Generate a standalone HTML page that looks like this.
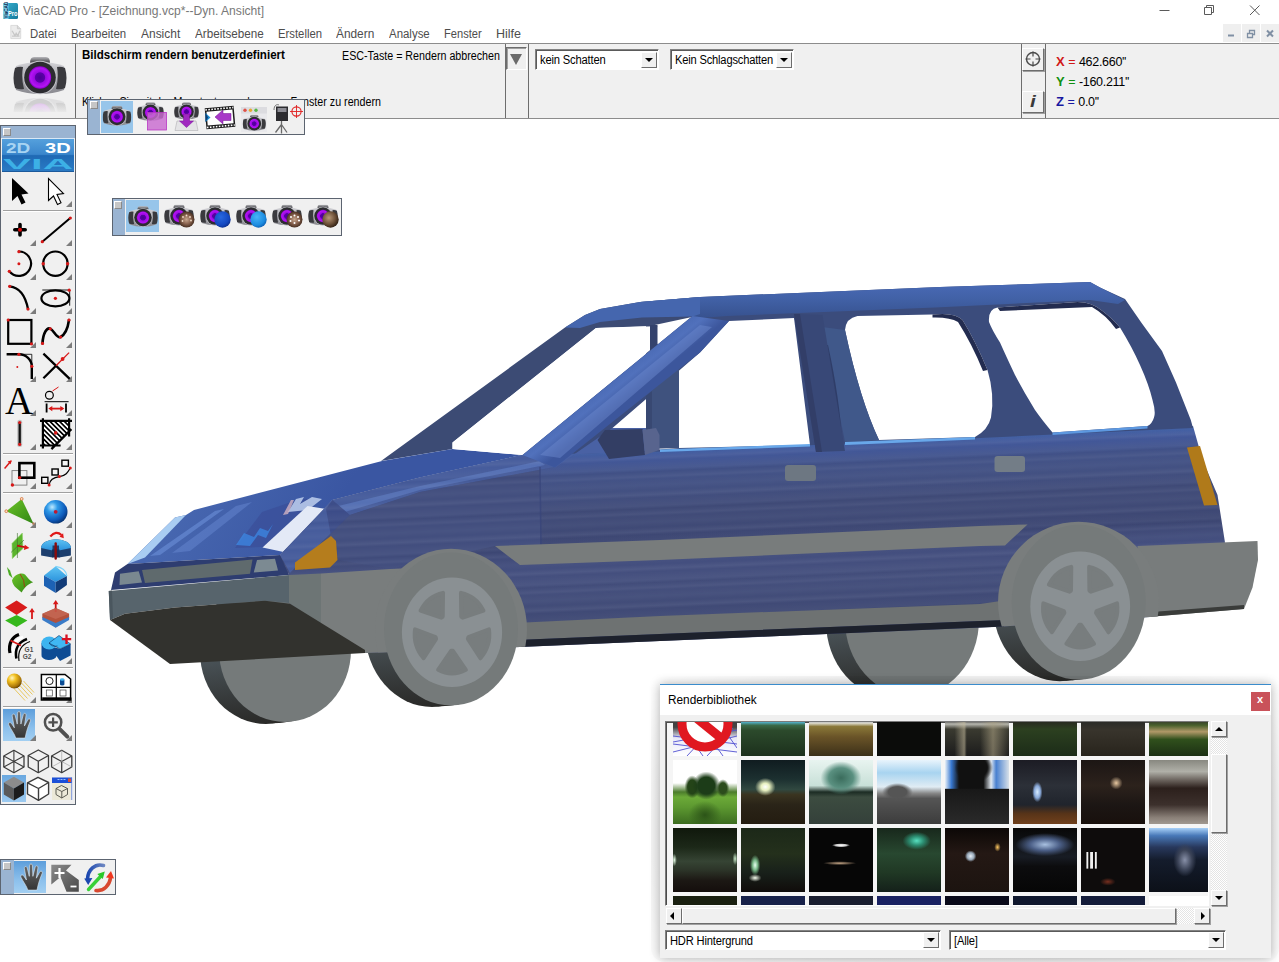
<!DOCTYPE html>
<html lang="de"><head><meta charset="utf-8"><title>ViaCAD Pro</title>
<style>
*{box-sizing:border-box;margin:0;padding:0}
html,body{width:1279px;height:962px;overflow:hidden;background:#fff}
body{position:relative;font-family:"Liberation Sans",sans-serif;font-size:12px;color:#000}
.abs{position:absolute}
.t{position:absolute;white-space:nowrap;line-height:1}
#titlebar{left:0;top:0;width:1279px;height:22px;background:#fff}
#menubar{left:0;top:22px;width:1279px;height:21px;background:#fff}
.mi{position:absolute;transform-origin:0 0;top:27.500px;font-size:12px;color:#4d4d4d;white-space:nowrap;line-height:1}
#toolbar{left:0;top:43px;width:1279px;height:76px;background:#f0f0f0;border-top:1px solid #8c8c8c;border-bottom:1px solid #8c8c8c}
.vdiv{position:absolute;top:44px;height:74px;width:1px;background:#6d6d6d}
.btn3d{position:absolute;background:#f0f0f0;border:1px solid;border-color:#fff #6d6d6d #6d6d6d #fff;box-shadow:1px 1px 0 #a0a0a0}
.combo{position:absolute;height:21px;background:#fff;border:1px solid;border-color:#828282 #fff #fff #828282;box-shadow:inset 1px 1px 0 #5a5a5a}
.combo .tx{transform-origin:0 0;position:absolute;left:4px;top:4px;font-size:12px;white-space:nowrap;line-height:1;letter-spacing:-0.2px}
.combo .dd{position:absolute;right:1px;top:2px;width:16px;height:16px;background:#f0f0f0;border:1px solid;border-color:#fff #6d6d6d #6d6d6d #fff}
.combo .dd:after{content:"";position:absolute;left:3px;top:5px;border:4px solid transparent;border-top:4px solid #000;border-bottom:0}
.float{position:absolute;background:#f0f0f0;border:1px solid #5c6470}
.float .hnd{position:absolute;left:0;top:0;bottom:0;width:12px;background:#9ab4d2}
.grip{position:absolute;width:8px;height:8px;background:#c6c6c6;border:1px solid;border-color:#fff #8a8a8a #8a8a8a #fff}
.hl{position:absolute;background:#97c5ea}
.sep{position:absolute;left:3px;width:70px;height:2px;border-top:1px solid #a0a0a0;border-bottom:1px solid #fff}
.tri{position:absolute;width:0;height:0;border-left:6px solid transparent;border-bottom:6px solid #808080}
.th{position:absolute;width:64px;height:64px;overflow:hidden}
.chk{background:repeating-conic-gradient(#fff 0 25%,#e4e4e4 0 50%) 0 0/2px 2px}
svg{position:absolute;overflow:visible}
</style></head><body>
<!-- shared symbols -->
<svg width="0" height="0" style="left:0;top:0">
<defs>
<linearGradient id="gBody" x1="0" y1="0" x2="0" y2="1"><stop offset="0" stop-color="#d4d4d8"/><stop offset=".5" stop-color="#a4a4aa"/><stop offset="1" stop-color="#8a8a90"/></linearGradient>
<linearGradient id="gTop" x1="0" y1="0" x2="0" y2="1"><stop offset="0" stop-color="#b8b8bc"/><stop offset="1" stop-color="#3c3c40"/></linearGradient>
<radialGradient id="gLens" cx=".5" cy=".5" r=".5"><stop offset="0" stop-color="#4a0092"/><stop offset=".42" stop-color="#5a00a8"/><stop offset=".5" stop-color="#9a08e0"/><stop offset=".85" stop-color="#b414f4"/><stop offset="1" stop-color="#8a00c8"/></radialGradient>
<symbol id="cam" viewBox="0 0 54 38">
<path d="M17 6 Q17 0 21 0 L33 0 Q37 0 37 6 Z" fill="url(#gTop)"/>
<path d="M3 9 Q14 5 27 5 Q40 5 51 9 Q54 21 51 33 Q40 37 27 37 Q14 37 3 33 Q0 21 3 9Z" fill="url(#gBody)"/>
<path d="M2 11 Q6 9 10 10 Q8 21 11 32 Q6 33 2 31 Q-1 21 2 11Z" fill="#3a3a3e"/>
<path d="M52 11 Q48 9 44 10 Q46 21 43 32 Q48 33 52 31 Q55 21 52 11Z" fill="#3a3a3e"/>
<circle cx="27" cy="20.500" r="16.800" fill="#c4c4ca"/>
<circle cx="27" cy="20.500" r="15.800" fill="#2c2c30"/>
<circle cx="27" cy="20.500" r="11.200" fill="url(#gLens)"/>
</symbol>
</defs></svg>

<div id="titlebar" class="abs"></div>
<!-- app icon -->
<svg style="left:3px;top:3px" width="15" height="16" viewBox="0 0 15 16">
<defs><linearGradient id="gApp" x1="0" y1="0" x2="1" y2="1"><stop offset="0" stop-color="#38b0d0"/><stop offset="1" stop-color="#157a9c"/></linearGradient></defs>
<rect x="0" y="0" width="15" height="16" rx="1.500" fill="url(#gApp)"/>
<rect x="0" y="0" width="5.500" height="16" fill="#7fd0e8"/>
<text x="4.600" y="15.500" font-family="Liberation Sans,sans-serif" font-weight="bold" font-size="4.600" fill="#0c2c50" transform="rotate(-90 4.600 15.500)">ViaCAD</text>
<text x="5" y="12.500" font-family="Liberation Sans,sans-serif" font-weight="bold" font-size="7" fill="#fff" textLength="9.500" lengthAdjust="spacingAndGlyphs">Pro</text>
</svg>
<div class="t" id="ttl" style="left:23px;top:5px;font-size:12.8px;color:#787878;transform-origin:0 0;transform:scaleX(.945)">ViaCAD Pro - [Zeichnung.vcp*--Dyn. Ansicht]</div>
<!-- window controls -->
<svg style="left:1140px;top:0" width="139" height="22" viewBox="0 0 139 22">
<path d="M19.500 10.500h10" stroke="#5a5a5a" stroke-width="1" fill="none"/>
<path d="M64.500 7.500h7v7h-7z M66.500 7.500v-2h7v7h-2" stroke="#5a5a5a" stroke-width="1" fill="none"/>
<path d="M110 5.500l9.500 9.500M119.500 5.500l-9.500 9.500" stroke="#5a5a5a" stroke-width="1" fill="none"/>
</svg>

<div id="menubar" class="abs"></div>
<!-- doc icon -->
<svg style="left:9.500px;top:24.500px" width="11.500" height="14" viewBox="0 0 13 17">
<path d="M.5 .5h8l4 4v12h-12z" fill="#ececec" stroke="#d4d4d4"/>
<path d="M8.500 .5v4h4" fill="#dcdcdc" stroke="#c8c8c8"/>
<path d="M2 7l3.500 6 1.500-3 2 3 2.500-6M2 13.500h9" stroke="#c8c8c8" fill="none" stroke-width="1.600"/>
</svg>
<span class="mi" style="left:30px;transform:scaleX(0.945)">Datei</span>
<span class="mi" style="left:71px;transform:scaleX(0.951)">Bearbeiten</span>
<span class="mi" style="left:141px;transform:scaleX(0.997)">Ansicht</span>
<span class="mi" style="left:195px;transform:scaleX(0.972)">Arbeitsebene</span>
<span class="mi" style="left:278px;transform:scaleX(0.943)">Erstellen</span>
<span class="mi" style="left:336px;transform:scaleX(0.989)">Ändern</span>
<span class="mi" style="left:389px;transform:scaleX(0.954)">Analyse</span>
<span class="mi" style="left:444px;transform:scaleX(0.927)">Fenster</span>
<span class="mi" style="left:496px;transform:scaleX(1.042)">Hilfe</span>
<!-- MDI buttons -->
<div class="abs" style="left:1223px;top:24px;width:56px;height:18px;background:#fff">
<div class="abs" style="left:0;top:0;width:18px;height:18px;background:#efefef"></div>
<div class="abs" style="left:19px;top:0;width:18px;height:18px;background:#efefef"></div>
<div class="abs" style="left:38px;top:0;width:18px;height:18px;background:#efefef"></div>
<svg style="left:0;top:0" width="56" height="18" viewBox="0 0 56 18">
<path d="M5 11.500h6" stroke="#8090a4" stroke-width="2"/>
<path d="M24.500 9.500h5v4h-5z M26.500 9v-2.500h5v4h-2" stroke="#8090a4" stroke-width="1.300" fill="none"/>
<path d="M44 6.500l6 6M50 6.500l-6 6" stroke="#8090a4" stroke-width="2"/>
</svg>
</div>

<div id="toolbar" class="abs"></div>
<div class="vdiv" style="left:75px"></div>
<div class="vdiv" style="left:505px"></div>
<div class="vdiv" style="left:528px"></div>
<div class="vdiv" style="left:1021px"></div>
<div class="vdiv" style="left:1045px"></div>
<!-- big camera -->
<svg style="left:13px;top:57px" width="54" height="38"><use href="#cam" width="54" height="38"/></svg>
<svg style="left:13px;top:97px;opacity:.16;overflow:hidden" width="54" height="15" viewBox="0 0 54 15"><g transform="translate(0,38) scale(1,-1)"><use href="#cam" width="54" height="38"/></g></svg>
<div class="abs" style="left:10px;top:104px;width:60px;height:10px;background:linear-gradient(#f0f0f000,#f0f0f0)"></div>

<div class="t" id="tb1" style="left:82px;top:49px;font-size:12px;font-weight:bold;transform-origin:0 0;transform:scaleX(.963)">Bildschirm rendern benutzerdefiniert</div>
<div class="t" id="tb2" style="left:342px;top:50px;font-size:12px;transform-origin:0 0;transform:scaleX(.892)">ESC-Taste = Rendern abbrechen</div>
<div class="t" id="tb3" style="left:82px;top:96px;font-size:12px;transform-origin:0 0;transform:scaleX(.891)">Klicken Sie mit der Maustaste um das neue Fenster zu rendern</div>

<!-- down-arrow button -->
<div class="abs" style="left:506px;top:47px;width:21px;height:23px;background:#f0f0f0;border:1px solid;border-color:#6d6d6d #fff #fff #6d6d6d;box-shadow:inset 1px 1px 0 #a0a0a0"></div>
<div class="abs" style="left:510px;top:54px;width:0;height:0;border:6.500px solid transparent;border-top:11px solid #6a6a6a;border-bottom:0"></div>

<div class="combo" style="left:535px;top:49px;width:124px"><span class="tx" style="transform:scaleX(.934)">kein Schatten</span><span class="dd"></span></div>
<div class="combo" style="left:670px;top:49px;width:124px"><span class="tx" style="transform:scaleX(.928)">Kein Schlagschatten</span><span class="dd"></span></div>

<!-- right buttons -->
<div class="btn3d" style="left:1022px;top:48px;width:22px;height:23px"></div>
<svg style="left:1024px;top:50px" width="18" height="18" viewBox="0 0 18 18"><circle cx="9" cy="9" r="6.500" fill="none" stroke="#4a4a4a" stroke-width="1.400"/><path d="M9 1.500v5M9 11.500v5M1.500 9h5M11.500 9h5" stroke="#4a4a4a" stroke-width="1.200"/></svg>
<div class="btn3d" style="left:1022px;top:91px;width:22px;height:22px"></div>
<div class="t" style="left:1029.500px;top:94px;font-style:italic;font-weight:bold;font-size:16px;color:#3a3a3a;transform-origin:0 0;transform:scaleX(1.300)">i</div>

<div class="t" style="left:1056px;top:55px;font-size:12.5px"><b style="color:#d01818;font-size:13px">X</b> <span style="color:#d01818">=</span> <span style="letter-spacing:-0.3px">462.660''</span></div>
<div class="t" style="left:1056px;top:75px;font-size:12.5px"><b style="color:#109010;font-size:13px">Y</b> <span style="color:#109010">=</span> <span style="letter-spacing:-0.3px">-160.211''</span></div>
<div class="t" style="left:1056px;top:95px;font-size:12.5px"><b style="color:#1818a0;font-size:13px">Z</b> <span style="color:#1818a0">=</span> <span style="letter-spacing:-0.3px">0.0''</span></div>
<svg id="car" style="left:0;top:0" width="1279" height="962" viewBox="0 0 1279 962">
<defs>
<linearGradient id="gTread" x1="0" y1="0" x2="0" y2="1"><stop offset="0" stop-color="#56626a"/><stop offset=".55" stop-color="#4a5358"/><stop offset="1" stop-color="#2a2a28"/></linearGradient>
<linearGradient id="gSide" gradientUnits="userSpaceOnUse" x1="700" y1="447" x2="708" y2="647"><stop offset="0" stop-color="#4362a6"/><stop offset=".04" stop-color="#42589a"/><stop offset=".12" stop-color="#435388"/><stop offset=".30" stop-color="#414c79"/><stop offset=".45" stop-color="#3d4773"/><stop offset=".57" stop-color="#434e7e"/><stop offset=".66" stop-color="#45507e"/><stop offset=".85" stop-color="#3e4873"/><stop offset="1" stop-color="#39426b"/></linearGradient>
<linearGradient id="gHood" gradientUnits="userSpaceOnUse" x1="180" y1="500" x2="300" y2="570"><stop offset="0" stop-color="#4767b0"/><stop offset="1" stop-color="#3a56a2"/></linearGradient>
<linearGradient id="gRoof" gradientUnits="userSpaceOnUse" x1="0" y1="285" x2="0" y2="320"><stop offset="0" stop-color="#4869b4"/><stop offset=".4" stop-color="#4161a6"/><stop offset="1" stop-color="#36508c"/></linearGradient>
<linearGradient id="gApil" gradientUnits="userSpaceOnUse" x1="600" y1="380" x2="620" y2="405"><stop offset="0" stop-color="#4666b0"/><stop offset=".5" stop-color="#5171bc"/><stop offset="1" stop-color="#3c569c"/></linearGradient>
<linearGradient id="gStk" x1="0" y1="0" x2="0" y2="1"><stop offset="0" stop-color="#a4acc4" stop-opacity="0"/><stop offset=".12" stop-color="#a4acc4" stop-opacity=".11"/><stop offset=".2" stop-color="#a4acc4" stop-opacity="0"/><stop offset=".42" stop-color="#a4acc4" stop-opacity=".07"/><stop offset=".5" stop-color="#202850" stop-opacity=".07"/><stop offset=".63" stop-color="#a4acc4" stop-opacity=".09"/><stop offset=".7" stop-color="#a4acc4" stop-opacity="0"/><stop offset=".86" stop-color="#a4acc4" stop-opacity=".06"/><stop offset="1" stop-color="#a4acc4" stop-opacity="0"/></linearGradient><pattern id="streak" width="60" height="37" patternUnits="userSpaceOnUse" patternTransform="rotate(-2.5)"><rect width="60" height="37" fill="url(#gStk)"/></pattern>
</defs>
<ellipse cx="266" cy="652" rx="66" ry="72" fill="url(#gTread)"/><ellipse cx="272.46" cy="651.32" rx="66" ry="72" fill="url(#gTread)"/><ellipse cx="278.73" cy="650.66" rx="66" ry="72" fill="url(#gTread)"/><ellipse cx="285" cy="650" rx="66" ry="72" fill="#757a7a"/>
<ellipse cx="893" cy="622" rx="67" ry="76" fill="url(#gTread)"/><ellipse cx="899.46" cy="621.32" rx="67" ry="76" fill="url(#gTread)"/><ellipse cx="905.73" cy="620.66" rx="67" ry="76" fill="url(#gTread)"/><ellipse cx="912" cy="620" rx="67" ry="76" fill="#757a7a"/>
<ellipse cx="432" cy="630.5" rx="67" ry="76.5" fill="url(#gTread)"/><ellipse cx="438.46" cy="629.99" rx="67" ry="76.5" fill="url(#gTread)"/><ellipse cx="444.73" cy="629.495" rx="67" ry="76.5" fill="url(#gTread)"/>
<ellipse cx="1059.7" cy="603.7" rx="67" ry="77.5" fill="url(#gTread)"/><ellipse cx="1066.16" cy="603.19" rx="67" ry="77.5" fill="url(#gTread)"/><ellipse cx="1072.43" cy="602.695" rx="67" ry="77.5" fill="url(#gTread)"/>
<polygon points="381,461 565,327.5 585,315 600,309 640,302 700,297 700,318 692,317 650,326 596,328 452.5,442.5 452.5,449" fill="#3c4b74" />
<polygon points="646,326 658,326 658,352 679,352 679,449 646,449" fill="#3d4f7a" />
<polygon points="646,326 652,326 652,449 646,449" fill="#34426c" />
<polygon points="127.5,564 175,517.5 186,515 194,510 382,461 452.5,449 522,455 420,477.5 332.5,500 280,555" fill="url(#gHood)" />
<polygon points="127.5,564 175,517.5 186,515 145,557.5" fill="#a9cdf2" />
<polygon points="150,556 215,511 224,509 160,555" fill="#6f94dc" opacity=".55"/>
<polygon points="172,553 236,506 252,502 190,551" fill="#6a8cd4" opacity=".45"/>
<polygon points="235,548 262,512 300,499 318,499 290,546" fill="#3a4f98" opacity=".7"/>
<polygon points="236,545 244,533 254,537 260,528 268,531 273,524 266,538 258,535 250,546" fill="#3c8ce8" opacity=".7"/>
<polygon points="288,512 296,499 304,497 300,504 312,497 322,499 308,510" fill="#c8d8f4" opacity=".8"/>
<polygon points="283,515 291,500 294,500 288,514" fill="#e8c0c8" opacity=".7"/>
<polygon points="262.5,547.5 307.5,506 326,509 286,552.5" fill="#e3e9f6" />
<polygon points="111,590 115,572.5 127.5,564 280,555 286,562.5 289,575" fill="#2e3d70" />
<polygon points="120,573.75 138.75,571.25 142,582.5 119.5,585" fill="#7a8890" />
<polygon points="142,570 252.5,559.5 250,573.75 145,583" fill="#5f6a6d" />
<polygon points="257,560 275,558.75 278,570.5 253.75,572.5" fill="#7c8a92" />
<polygon points="280,555 332.5,500 420,477.5 522,455 560,452 660,449.5 980,436 1150,428 1193,426 1202.5,460 1217.5,495 1225,542.5 1150,617 994,627 660,641 520,647 390,652 365,653 289,603 289,575" fill="url(#gSide)" />
<polygon points="280,555 332.5,500 420,477.5 522,455 555,467 420,492 350,515 290,573" fill="#465c9c" />
<polygon points="326,509 420,486 540,461 545,465 420,490 338,514" fill="#6484cc" opacity=".5"/>
<polygon points="326,509 332.5,500 350,515 352,556 338,560 336,541 331,536" fill="#3c4c88" />
<polygon points="290,573 350,515 420,492 555,467 540,470 540,546 495,546 390,569 338,560 337.5,545" fill="#424e7e" />
<polygon points="280,555 332.5,500 420,477.5 522,455 560,452 660,449.5 980,436 1150,428 1193,426 1202.5,460 1217.5,495 1225,542.5 1150,617 994,627 660,641 520,647 390,652 365,653 289,603 289,575" fill="url(#streak)" />
<polygon points="522,455 692.5,316 700,297 940,287 1090,282 1100,287.5 1125,299 1141.6,323 1162,351 1176,382.5 1190.8,420 1193,428 1150,430 980,438 660,451.5 560,454" fill="#3b4c7c" />
<polygon points="640,302 700,297 940,287 1090,282 1100,287.5 1125,300 1118,304 1090,300 935,307.5 727,316 700,318 692.5,316" fill="url(#gRoof)" />
<polygon points="565,327.5 585,315 600,309 640,302 700,297 700,314 692.5,316.5 642,317.5 600,322 580,328" fill="#4566ae" />
<polygon points="452.5,449 452.5,442.5 596,328 680,325.5 522.5,455" fill="#fff" />
<polygon points="650,325 657.5,325 657.5,345 650,351" fill="#34426c" />
<polygon points="612.5,428 700,352.5 729,321 794,318 810,445 679,448 660,449.5 646,450 646,428" fill="#fff" />
<polygon points="646,396 679,366 679,448 646,449" fill="#3f527e" />
<polygon points="646,396 652,391 652,449 646,449" fill="#384872" />
<polygon points="540,462 555,467.5 612.5,428 646,428 646,451 560,455" fill="#4961a4" />
<polygon points="522.5,455 692.5,316 729,321 700,352.5 555,467.5" fill="url(#gApil)" />
<polygon points="540,455 700,325 712,327 560,458" fill="#6f8cd0" opacity=".45"/>
<path d="M845 330 Q846 318 857.500 316 L932.500 314.500 Q955 312 962.500 320 Q975 340 987.500 370 Q995 395 991 417.500 Q988 430 975 437 L879 440 Q860 400 845 330Z" fill="#fff"/>
<path d="M822 327 L845 330 Q860 400 879 440 L845 442 Z" fill="#40588a"/>
<path d="M828 345 Q840 400 842 442 L836 442 Q834 400 824 345Z" fill="#2f3d68"/>
<polygon points="794,314 822.5,315 845,451 816,452" fill="#384877" />
<polygon points="794,314 800,314 822,452 816,452" fill="#323e68" />
<path d="M989 322 Q988 309 997.500 307.500 L1077.500 302 Q1092 302 1102.500 311 Q1113 319 1120 327.500 Q1132 347 1140 365 Q1149 385 1152.500 400 Q1156 412 1154 417.500 Q1152 424 1147.500 426 L1052.500 432.500 Q1042 420 1035 410 Q1024 392 1015 375 Q1006 356 1000 342.500 Q992 330 989 322Z" fill="#fff"/>
<path d="M997.500 307.500 L1077.500 302 Q1092 302 1102.500 311 Q1113 319 1120 327.500 L1116 329 Q1106 315 1092 307 L1000 311Z" fill="#232c50"/>
<path d="M932.500 314.500 Q955 312 962.500 320 Q975 340 987.500 370 L983 371 Q972 344 958 322 Q950 317 932.500 317.500Z" fill="#232c50"/>
<path d="M660 449.500 L810 444 L810 446.500 L660 452Z" fill="#69a8ea"/>
<path d="M845 442 L975 437 L975 439.500 L845 445Z" fill="#69a8ea"/>
<path d="M1052.500 432.500 L1147.500 426 L1147.500 428.500 L1052.500 435Z" fill="#5d98e0"/>
<polygon points="597.5,440 605,430 642.5,429 645,455 609,459" fill="#333e64" />
<polygon points="642.5,430 656,428 659.5,435 659.5,450 645,455" fill="#58648e" />
<rect x="785" y="465" width="31" height="16" rx="3" fill="#6d7782"/>
<rect x="994.500" y="456" width="30.500" height="16" rx="3" fill="#737d87"/>
<path d="M540 467 L541 546" stroke="#38457a" stroke-width="1.500" fill="none" opacity=".7"/>
<polygon points="495,546 660,540 980,526 1027.5,524.5 1005,545.5 980,546 660,560 520,565" fill="#787c7c" />
<polygon points="390,569 525,622.5 660,616 980,604 1004,600.5 1004,620.5 980,621 660,634 517,640 380,650" fill="#6e7272" />
<polygon points="517,640 660,634 980,621 1004,620 1004,626.5 980,627.5 660,641 519,647" fill="#1d212c" />
<polygon points="289,575 321,573.5 321,625 289,603" fill="#6d7575" />
<polygon points="321,573.5 390,569 460,566 460,650 365,653 321,625" fill="#797d7d" />
<polygon points="295,562.5 331,536 336,541 337.5,560 330,567.5 295,570" fill="#b57d1d" />
<polygon points="108.75,591 289,575 289,603 265,600.75 175,607.5 125,613.75 110,620" fill="#57646c" />
<polygon points="108.75,591 112,590.5 113,618 110,620" fill="#4a565e" />
<polygon points="110,620 125,613.75 175,607.5 265,600.75 290,603.75 365,650 365,653 170,664" fill="#32322e" />
<polygon points="1137.5,546 1257.5,541 1258,560 1252.5,587.5 1244,609 1147.5,617 1140,600" fill="#787c7c" />
<polygon points="1145,612.5 1244,605 1244,609 1147.5,617" fill="#3a3c3a" />
<polygon points="1187,447.5 1200,446 1217.5,505 1204,505.5" fill="#b07a1a" />
<clipPath id="cpBody"><polygon points="250,400 1240,400 1240,612 1150,617 994,627 660,641 520,647 390,652 365,653 300,610"/></clipPath>
<g clip-path="url(#cpBody)"><ellipse cx="451" cy="629.500" rx="76" ry="80.700" fill="#797d7d"/><ellipse cx="1078.500" cy="602.300" rx="80.500" ry="80.500" fill="#797d7d"/></g>
<ellipse cx="451" cy="629" rx="67" ry="76.5" fill="#757a7a"/><ellipse cx="452" cy="632.2" rx="50.1" ry="54.8" fill="#8a9093"/><path d="M468.454 637.022 L488.984 629.371 Q491.071 646.086 480.4 658.266 L467.903 638.877 Z" fill="#787d7e" stroke="#787d7e" stroke-width="4" stroke-linejoin="round"/><path d="M452.891 650.806 L465.888 669.799 Q452 677.136 438.112 669.799 L451.109 650.806 Z" fill="#787d7e" stroke="#787d7e" stroke-width="4" stroke-linejoin="round"/><path d="M436.097 638.877 L423.6 658.266 Q412.929 646.086 415.016 629.371 L435.546 637.022 Z" fill="#787d7e" stroke="#787d7e" stroke-width="4" stroke-linejoin="round"/><path d="M441.28 617.72 L420.559 610.711 Q427.853 595.846 443.031 592.853 L442.723 616.574 Z" fill="#787d7e" stroke="#787d7e" stroke-width="4" stroke-linejoin="round"/><path d="M461.277 616.574 L460.969 592.853 Q476.147 595.846 483.441 610.711 L462.72 617.72 Z" fill="#787d7e" stroke="#787d7e" stroke-width="4" stroke-linejoin="round"/>
<ellipse cx="1078.7" cy="602.2" rx="67" ry="77.5" fill="#757a7a"/><ellipse cx="1080.2" cy="606.2" rx="49.9" ry="54.8" fill="#8a9093"/><path d="M1096.59 611.022 L1117.04 603.371 Q1119.12 620.086 1108.49 632.266 L1096.04 612.877 Z" fill="#787d7e" stroke="#787d7e" stroke-width="4" stroke-linejoin="round"/><path d="M1081.09 624.806 L1094.03 643.799 Q1080.2 651.136 1066.37 643.799 L1079.31 624.806 Z" fill="#787d7e" stroke="#787d7e" stroke-width="4" stroke-linejoin="round"/><path d="M1064.36 612.877 L1051.91 632.266 Q1041.28 620.086 1043.36 603.371 L1063.81 611.022 Z" fill="#787d7e" stroke="#787d7e" stroke-width="4" stroke-linejoin="round"/><path d="M1069.52 591.72 L1048.88 584.711 Q1056.15 569.846 1071.27 566.853 L1070.96 590.574 Z" fill="#787d7e" stroke="#787d7e" stroke-width="4" stroke-linejoin="round"/><path d="M1089.44 590.574 L1089.13 566.853 Q1104.25 569.846 1111.52 584.711 L1090.88 591.72 Z" fill="#787d7e" stroke="#787d7e" stroke-width="4" stroke-linejoin="round"/>
</svg>
<!-- LEFT PALETTE -->
<div class="float" style="left:0;top:125px;width:76px;height:680px;border-left-width:1px"></div>
<div class="abs" style="left:1px;top:126px;width:74px;height:12px;background:#9ab4d2"></div>
<div class="grip" style="left:3px;top:128px"></div>
<div class="abs" id="via" style="left:2px;top:138px;width:72px;height:34px;background:linear-gradient(#55a0dc 0,#3a86cc 48%,#1f69b4 52%,#2a7ac4 100%);border-top:1px solid #d8e8f6;border-bottom:1px solid #1c5a9c;overflow:hidden">
<div class="t" style="left:3.500px;top:1.600px;font-size:14.300px;font-weight:bold;color:#a8d4f2;transform-origin:0 0;transform:scaleX(1.330)">2D</div>
<div class="t" style="left:42.500px;top:1.600px;font-size:14.300px;font-weight:bold;color:#fff;transform-origin:0 0;transform:scaleX(1.400)">3D</div>
<div class="t" style="left:0.500px;top:16.500px;font-size:15.400px;font-weight:bold;color:#3cb0e6;transform-origin:0 0;transform:scaleX(2.730)">VIA</div>
</div>
<div class="sep" style="top:210px"></div>
<div class="sep" style="top:453px"></div>
<div class="sep" style="top:492px"></div>
<div class="sep" style="top:667px"></div>
<div class="sep" style="top:706px"></div>
<div class="hl" style="left:3px;top:709px;width:32px;height:32px;background:linear-gradient(#5d9edb,#8cc0ec 60%,#a2cff2)"></div>
<div class="hl" style="left:2px;top:775px;width:24px;height:27px;background:linear-gradient(#6aa8e0,#9ccaf0)"></div>

<svg style="left:0;top:125px" width="76" height="680" viewBox="0 125 76 680">
<defs>
<radialGradient id="gSph" cx=".35" cy=".3" r=".75"><stop offset="0" stop-color="#bfeaff"/><stop offset=".3" stop-color="#2f9ae8"/><stop offset=".75" stop-color="#0c58b8"/><stop offset="1" stop-color="#06306c"/></radialGradient>
<radialGradient id="gGold" cx=".35" cy=".3" r=".75"><stop offset="0" stop-color="#fff6c0"/><stop offset=".35" stop-color="#f2c020"/><stop offset=".8" stop-color="#a87408"/><stop offset="1" stop-color="#5c3c00"/></radialGradient>
<linearGradient id="gGrn" x1="0" y1="0" x2="1" y2="1"><stop offset="0" stop-color="#6cc428"/><stop offset="1" stop-color="#2f8414"/></linearGradient>
<linearGradient id="gHand" x1="0" y1="0" x2="0" y2="1"><stop offset="0" stop-color="#6a6a6a"/><stop offset="1" stop-color="#343434"/></linearGradient>
<linearGradient id="gCubeT" x1="0" y1="0" x2="0" y2="1"><stop offset="0" stop-color="#5fc4f4"/><stop offset="1" stop-color="#2a92dc"/></linearGradient>
<symbol id="hand" viewBox="0 0 26 30" overflow="visible">
<path d="M9 29 C8 25 4 20 1.500 15 C0.500 12.500 3 11.500 4.500 13.500 L7.500 18 L5.200 5.500 C4.800 3 7.800 2.400 8.400 5 L10.600 14 L10.800 2.500 C10.800 0 14 0 14.100 2.500 L14.500 14 L17 4 C17.600 1.600 20.500 2.300 20 5 L18.300 16 L21.800 9.500 C23 7.300 25.600 8.800 24.600 11 C22.500 16 20.500 21 19 29 Z" fill="url(#gHand)" stroke="#d8e4ee" stroke-width=".7" stroke-linejoin="round"/>
</symbol>
<symbol id="tr" viewBox="0 0 6 6"><path d="M6 0V6H0Z" fill="#7c7c7c"/></symbol>
</defs>
<!-- corner triangles -->
<g>
<use href="#tr" x="66" y="201" width="6" height="6"/>
<use href="#tr" x="30" y="240" width="6" height="6"/><use href="#tr" x="66" y="240" width="6" height="6"/>
<use href="#tr" x="30" y="274" width="6" height="6"/><use href="#tr" x="66" y="274" width="6" height="6"/>
<use href="#tr" x="30" y="308" width="6" height="6"/><use href="#tr" x="66" y="308" width="6" height="6"/>
<use href="#tr" x="30" y="342" width="6" height="6"/><use href="#tr" x="66" y="342" width="6" height="6"/>
<use href="#tr" x="30" y="376" width="6" height="6"/><use href="#tr" x="66" y="376" width="6" height="6"/>
<use href="#tr" x="30" y="410" width="6" height="6"/><use href="#tr" x="66" y="410" width="6" height="6"/>
<use href="#tr" x="30" y="444" width="6" height="6"/><use href="#tr" x="66" y="444" width="6" height="6"/>
<use href="#tr" x="30" y="483" width="6" height="6"/><use href="#tr" x="66" y="483" width="6" height="6"/>
<use href="#tr" x="30" y="522" width="6" height="6"/><use href="#tr" x="66" y="522" width="6" height="6"/>
<use href="#tr" x="30" y="556" width="6" height="6"/><use href="#tr" x="66" y="556" width="6" height="6"/>
<use href="#tr" x="30" y="590" width="6" height="6"/><use href="#tr" x="66" y="590" width="6" height="6"/>
<use href="#tr" x="30" y="624" width="6" height="6"/><use href="#tr" x="66" y="624" width="6" height="6"/>
<use href="#tr" x="30" y="658" width="6" height="6"/><use href="#tr" x="66" y="658" width="6" height="6"/>
<use href="#tr" x="30" y="697" width="6" height="6"/><use href="#tr" x="66" y="697" width="6" height="6"/>
<use href="#tr" x="30" y="735" width="6" height="6"/><use href="#tr" x="66" y="735" width="6" height="6"/>
</g>
<!-- row1 arrows -->
<path d="M12 178 L12 201 L17.500 196 L21.500 204.500 L25.500 202.600 L21.500 194.500 L28.500 193.500 Z" fill="#000"/>
<path d="M48.500 178.500 L48.500 200.500 L53.500 196 L57.500 204.500 L61 202.800 L57 194.500 L63.500 193.500 Z" fill="#fff" stroke="#000" stroke-width="1.100" stroke-linejoin="miter"/>
<!-- row2 -->
<path d="M20 224.500v10.400M14.800 229.700h10.400" stroke="#000" stroke-width="3.600" stroke-linecap="round"/><circle cx="20" cy="229.700" r="2" fill="#e01010"/>
<path d="M42.300 241.700L70.300 218" stroke="#000" stroke-width="2" stroke-linecap="round"/><circle cx="42.300" cy="241.700" r="1.600" fill="#d81818"/><circle cx="70.300" cy="218" r="1.600" fill="#d81818"/>
<!-- row3 -->
<path d="M18.900 251.500 A12.200 12.200 0 1 1 9.300 271.300" fill="none" stroke="#000" stroke-width="2.200" stroke-linecap="round"/><circle cx="18.900" cy="251.700" r="1.600" fill="#d81818"/><circle cx="9.300" cy="271.300" r="1.600" fill="#d81818"/><circle cx="18.900" cy="263.700" r="1.500" fill="#d81818"/>
<circle cx="55.400" cy="263.700" r="12.200" fill="none" stroke="#000" stroke-width="2.200"/><circle cx="43.200" cy="263.700" r="1.700" fill="#d81818"/><circle cx="67.600" cy="263.700" r="1.700" fill="#d81818"/>
<!-- row4 -->
<path d="M9.700 286.300 Q24 288 28 309" fill="none" stroke="#000" stroke-width="2.300" stroke-linecap="round"/><circle cx="9.700" cy="286.300" r="1.600" fill="#d81818"/><circle cx="28" cy="309" r="1.600" fill="#d81818"/>
<ellipse cx="55.400" cy="298.300" rx="14" ry="8" fill="none" stroke="#000" stroke-width="2.200"/><path d="M42.300 290H69.700V305.700" fill="none" stroke="#000" stroke-width=".9"/><circle cx="69.200" cy="290.200" r="1.600" fill="#d81818"/><circle cx="55.400" cy="298.300" r="1.600" fill="#d81818"/>
<!-- row5 -->
<rect x="8.200" y="320" width="23.200" height="23.800" fill="none" stroke="#000" stroke-width="2.200"/><circle cx="8.200" cy="320" r="1.600" fill="#d81818"/><circle cx="31.400" cy="343.800" r="1.600" fill="#d81818"/>
<path d="M42.500 343.400 C43 333 47 327 50.300 328.600 C54 330.500 57 339 60.600 337 C65 334.500 68 327 69 320" fill="none" stroke="#000" stroke-width="2.600" stroke-linecap="round"/><circle cx="42.500" cy="343.400" r="1.600" fill="#d81818"/><circle cx="50.300" cy="328.800" r="1.600" fill="#d81818"/><circle cx="60.600" cy="337" r="1.600" fill="#d81818"/><circle cx="69" cy="320" r="1.600" fill="#d81818"/>
<!-- row6 -->
<path d="M18.900 354.300H31.800V366.300" fill="none" stroke="#000" stroke-width=".8"/><path d="M6.600 354.300H18.900A12.900 12 0 0 1 31.800 366.300V378.900" fill="none" stroke="#000" stroke-width="2.400"/><circle cx="18.900" cy="354.300" r="1.600" fill="#d81818"/><circle cx="31.800" cy="366.300" r="1.600" fill="#d81818"/><circle cx="17.300" cy="367" r="1" fill="#d81818"/>
<path d="M43.400 353.700L69.700 378.900M43.400 378.300L56 365.700" stroke="#000" stroke-width="2.300"/><path d="M56 365.700L69.100 352.600" stroke="#d81818" stroke-width="1.300"/><circle cx="62.600" cy="359" r="1.900" fill="#d81818"/>
<!-- row7 -->
<text x="5" y="413.700" font-family="Liberation Serif,serif" font-size="41" fill="#000" textLength="28" lengthAdjust="spacingAndGlyphs">A</text>
<circle cx="49.400" cy="395.200" r="3.900" fill="none" stroke="#000" stroke-width="1.200"/><path d="M52.500 391L58.500 387" stroke="#d81818" stroke-width="1"/><path d="M44.600 401.700H68.600" stroke="#000" stroke-width="1"/><path d="M46.600 403.400V412.600M66 403.400V412.600" stroke="#000" stroke-width="1.800"/><path d="M50 408.600H62.500" stroke="#d81818" stroke-width="1.800"/><path d="M48.300 408.600l4-2.600v5.200zM64.300 408.600l-4-2.600v5.200z" fill="#d81818"/>
<!-- row8 -->
<path d="M19.700 422.300V444.600" stroke="#c0c0c0" stroke-width="5" stroke-linecap="round"/><path d="M19.700 422.300V444.600" stroke="#111" stroke-width="2.300"/><circle cx="19.700" cy="422.500" r="1.600" fill="#d81818"/><circle cx="19.700" cy="444.400" r="1.600" fill="#d81818"/>
<defs><pattern id="hatch" width="3.400" height="3.400" patternUnits="userSpaceOnUse" patternTransform="rotate(45)"><rect width="3.400" height="3.400" fill="#fff"/><rect width="3.400" height="1.700" fill="#000"/></pattern></defs>
<path d="M42.900 420.800H69.100V431.400L54.500 445.500H42.900Z" fill="url(#hatch)"/>
<path d="M40 420.800H72M42.900 418.300V448.600M69.100 418.300V436.600M40 445.500H60.600M71.400 429.100L51.400 449.100" stroke="#000" stroke-width="2.200" fill="none"/><circle cx="55.700" cy="432.900" r="1.800" fill="#d81818"/>
<!-- row9 -->
<path d="M4.600 468.600L11 461" stroke="#d81818" stroke-width="1.500"/><path d="M11.800 460.200l-4.200 1.200 3 2.800z" fill="#d81818"/>
<rect x="12" y="470.600" width="14.900" height="14.500" fill="none" stroke="#7a7a7a" stroke-width=".9"/><rect x="19.400" y="463.100" width="14.900" height="14.600" fill="none" stroke="#000" stroke-width="2.600"/><circle cx="19.600" cy="477.600" r="1.700" fill="#d81818"/><circle cx="12.400" cy="485" r="1.700" fill="#d81818"/>
<path d="M49.100 484.900C50 478 56 477 59.400 476.600C66 476 68 472 70.300 468" fill="none" stroke="#000" stroke-width="1.200"/>
<rect x="41.700" y="477.300" width="6.200" height="6" fill="#f4f4f4" stroke="#000" stroke-width="1.400"/><rect x="52" y="469" width="6.200" height="6" fill="#f4f4f4" stroke="#000" stroke-width="1.400"/><rect x="61.900" y="460.200" width="6.500" height="6" fill="#f4f4f4" stroke="#000" stroke-width="1.400"/>
<circle cx="49.100" cy="484.900" r="1.500" fill="#d81818"/><circle cx="59.400" cy="476.600" r="1.500" fill="#d81818"/><circle cx="70.300" cy="468" r="1.500" fill="#d81818"/>
<!-- row10 -->
<path d="M6.300 511.200L21.700 498.900L33.700 524Z" fill="url(#gGrn)"/><circle cx="6.300" cy="511.200" r="1.400" fill="#f8e0c8" stroke="#d06020" stroke-width=".7"/><circle cx="21.700" cy="498.900" r="1.400" fill="#f8e0c8" stroke="#d06020" stroke-width=".7"/><circle cx="33.400" cy="523.600" r="1.400" fill="#b08060"/>
<circle cx="55.700" cy="511.800" r="11.800" fill="url(#gSph)"/><circle cx="55.700" cy="511.800" r="1.900" fill="#c01830"/>
<!-- row11 -->
<path d="M12 543.400L22.300 533.100L22.900 548.600L12.300 558.600Z" fill="#5ab42c" stroke="#8ad060" stroke-width=".6"/><path d="M17.400 533V558M11 552.500L24 540" stroke="#3c6c2c" stroke-width=".6"/><path d="M17.100 545.700L26 547.400" stroke="#c01010" stroke-width="1.800"/><path d="M29.400 548l-4.600-3.200-.9 5.200z" fill="#e01818"/>
<path d="M41.100 548A14.900 8.800 0 0 1 70.900 548V555.400L59 557.500V551H52.500V557.500L41.100 555.400Z" fill="#1d3f6e"/><path d="M41.100 548A14.900 8.800 0 0 1 70.900 548L59 550.500V545.500H52.500V550.500Z" fill="url(#gCubeT)"/>
<rect x="52" y="549.500" width="7.500" height="8" fill="#16305a"/><path d="M55.700 543.400V558.500" stroke="#8c0c0c" stroke-width="2.400" stroke-linecap="round"/><path d="M50.300 536.500Q56 530 61.500 535" fill="none" stroke="#e01818" stroke-width="2.200"/><path d="M63.800 538.200l-4.300-1.400 3.600-3.500z" fill="#e01818"/>
<!-- row12 -->
<path d="M6.900 567L10 570.500L12.600 578.300L9 575Z" fill="#4cac24"/><path d="M12 580.600C14 574 22 572 25 574.500C28 578 30 581 33.100 582.300C28 584 24 588 21.700 592.600C18 589 13 587 12 580.600Z" fill="url(#gGrn)"/><path d="M20 574Q25 580 24.500 587" fill="none" stroke="#b02810" stroke-width=".8"/>
<path d="M55.700 566.300L66.900 576L55.700 582L44 575.400Z" fill="url(#gCubeT)"/><path d="M44 575.400L55.700 582V593.100L44 585.700Z" fill="#1d62b4"/><path d="M66.900 576L55.700 582V593.100L66.900 585.100Z" fill="#123c78"/><path d="M55.700 566.300Q66 568 66.900 576" fill="none" stroke="#7fd4fa" stroke-width="1.200"/>
<!-- row13 -->
<path d="M5.100 607.400L16.600 600.600L27.400 607.400L16.600 614.900Z" fill="#d81c1c"/><path d="M5.100 620.600L16.600 614.900L27.400 620.600L16.600 626.900Z" fill="#36b81c"/><path d="M32 618.900V611" stroke="#d81818" stroke-width="1.800"/><path d="M32 608l-2.800 4.200h5.600z" fill="#d81818"/>
<path d="M42.300 613.700L55.700 608L69.100 613.700V618L55.700 627.400L42.300 618Z" fill="#b4523c"/><path d="M42.300 617L55.700 623L69.100 617V620L55.700 627.800L42.300 620Z" fill="#3a7cc8"/><path d="M55.700 612V603.500" stroke="#c81414" stroke-width="1.800"/><path d="M55.700 600l-2.800 4.200h5.600z" fill="#d81818"/><path d="M42.300 613.700L55.700 608L69.100 613.700L55.700 619Z" fill="#c86c58" opacity=".7"/>
<!-- row14 -->
<g fill="none" stroke-linecap="butt"><path d="M10 653C8 644 12 637 19 634.500" stroke="#000" stroke-width="3.200"/><path d="M13.800 656C11.500 646 15.500 639.500 23 637" stroke="#fff" stroke-width="2.600"/><path d="M16.400 658.500C14.500 649 18.500 642 27 639" stroke="#000" stroke-width="2.600"/><path d="M19 661C17.500 651.500 21.500 644.500 30 641.500" stroke="#000" stroke-width="1.200"/><path d="M10.500 640.500L21 645.500" stroke="#d81818" stroke-width="1.500"/></g>
<text x="24.600" y="651.700" font-family="Liberation Sans,sans-serif" font-weight="bold" font-size="6.500" fill="#4c4c4c">G1</text><text x="22.800" y="659" font-family="Liberation Sans,sans-serif" font-weight="bold" font-size="6.500" fill="#4c4c4c">G2</text>
<path d="M41.500 643V655A7.500 4.500 0 0 0 56.500 656L60 661L70.600 655.500V644L60 649Z" fill="#0e4c94"/><ellipse cx="49.200" cy="643" rx="7.800" ry="6.400" fill="#3cb4f0"/><path d="M49 643L59 635.500L70.600 644L60 649Z" fill="#40b8f4" stroke="#0c2c5c" stroke-width=".6"/><path d="M49 643A7.500 6 0 0 0 57.500 646" fill="none" stroke="#0c2c5c" stroke-width=".6"/><path d="M66.500 634.500V644M61.800 639.200H71.200" stroke="#d81020" stroke-width="2.300"/>
<!-- row15 -->
<g stroke="#e8c860" stroke-width="1"><path d="M14 688.500L25 700.500M16.500 686.500L27.500 698.500M19 684.500L30 696.500M21.500 683L32.500 694.500M23.500 681L34 692.500"/></g><circle cx="14.300" cy="681" r="7.500" fill="url(#gGold)"/>
<path d="M41.400 674.400H65L70.600 679V699.900H41.400Z" fill="#fff" stroke="#000" stroke-width="1.500"/><path d="M56.300 674.400V699.900M41.400 687.300H70.600" stroke="#000" stroke-width="1.200"/><path d="M42.200 698.600H70.600" stroke="#000" stroke-width="2.600"/><circle cx="49.500" cy="681" r="3.600" fill="none" stroke="#000" stroke-width=".9"/><path d="M60 679.500V684.500A2.200 1 0 0 0 64.400 684.500V679.500Z" fill="#0c4c94"/><ellipse cx="62.200" cy="679.500" rx="2.200" ry="1.200" fill="#48b8f0"/><rect x="46.300" y="690" width="6" height="6" fill="none" stroke="#444" stroke-width=".7"/><rect x="60" y="690" width="6" height="6" fill="none" stroke="#444" stroke-width=".7"/>
<!-- row16 -->
<use href="#hand" x="6.500" y="711" width="26" height="28"/>
<circle cx="53.100" cy="722.300" r="8.200" fill="none" stroke="#505050" stroke-width="2.500"/><path d="M53.100 717.500V727M48.400 722.300H57.800" stroke="#505050" stroke-width="2.200"/><path d="M59.500 728.800L67.300 736.600" stroke="#505050" stroke-width="4" stroke-linecap="round"/>
<!-- row17 wire cubes -->
<g fill="none" stroke="#3c3c3c" stroke-width="1.300" stroke-linejoin="round">
<path d="M13.900 750.300L24 756V767L13.900 772.700L3.800 767V756Z"/><path d="M13.900 750.300V772.700M3.800 756L24 767M24 756L3.800 767" stroke-width="1.100"/>
<path d="M38.300 750L48.500 755.500V767L38.300 772.700L28.200 767V755.500Z"/><path d="M28.200 755.500L38.300 761.200L48.500 755.500M38.300 761.200V772.700"/>
<path d="M61.700 750.300L71.800 756V767L61.700 772.700L51.600 767V756Z"/><path d="M51.600 756L61.700 761.500L71.800 756M61.700 761.500V772.700" /><path d="M61.700 750.300V761.500M51.600 767L61.700 761.500L71.800 767" stroke="#9a9a9a" stroke-width=".6"/>
</g>
<!-- row18 -->
<path d="M13.900 776.800L24 782.500L13.900 788.500L3.800 782.500Z" fill="#8c8c8c"/><path d="M3.800 782.500L13.900 788.500V800.600L3.800 794.500Z" fill="#5a5a5a"/><path d="M24 782.500L13.900 788.500V800.600L24 794.500Z" fill="#1c1c1c"/>
<g fill="#fff" stroke="#3c3c3c" stroke-width="1.400" stroke-linejoin="round"><path d="M38 777.300L48.600 782.500V794L38.500 800.300L27.500 794V782.800Z"/><path d="M27.500 782.800L38.500 788.500L48.600 782.500M38.500 788.500V800.300" fill="none"/></g>
<rect x="52" y="777.500" width="20" height="22.500" fill="#ece9d8"/><rect x="52" y="777.500" width="20" height="5.500" fill="#1c50d8"/><rect x="68" y="778.500" width="3" height="3.500" fill="#e05030"/><path d="M57.500 779.500h8" stroke="#9cc0f8" stroke-width="1.200" stroke-dasharray="2 1"/><path d="M71.700 777.500V800" stroke="#6080e0" stroke-width=".8"/>
<g fill="none" stroke="#4c4c44" stroke-width=".9" stroke-linejoin="round"><path d="M61.500 785.500L67.500 788.500V794.500L61.800 798L56 794.500V788.500Z"/><path d="M56 788.500L61.800 791.500L67.500 788.500M61.800 791.500V798"/></g>
</svg>
<!-- FLOATING TOOLBAR 1 (render tools) -->
<div class="float" style="left:87px;top:99px;width:218px;height:36px"><div class="hnd"></div></div>
<div class="grip" style="left:90px;top:101px"></div>
<div class="hl" style="left:100.500px;top:100.500px;width:32.500px;height:32px"></div>
<svg style="left:87px;top:99px" width="218" height="36" viewBox="87 99 218 36">
<use href="#cam" x="102.500" y="105.500" width="29" height="21"/>
<!-- cam + magenta square -->
<use href="#cam" x="137" y="102" width="27" height="19.500"/>
<rect x="147.500" y="112.500" width="19" height="17.500" fill="#c86ad0" fill-opacity=".82" stroke="#b838c4" stroke-width=".8"/>
<!-- cam + tray + arrow -->
<path d="M177 121h19l2 9.500h-23z" fill="#e4e4e6" stroke="#b0b0b4" stroke-width=".6"/>
<use href="#cam" x="174" y="102" width="25" height="18"/>
<path d="M183.500 114h6v7h4l-7 6.500-7-6.500h4z" fill="#a028c0" stroke="#781098" stroke-width=".5"/>
<!-- film strip -->
<g transform="rotate(-5 220 117)"><rect x="205.500" y="107" width="29" height="21" fill="#1c1c1c"/><rect x="207" y="110.500" width="26" height="14" fill="#fff"/>
<path d="M206 108.700h28M206 126.300h28" stroke="#fff" stroke-width="1.600" stroke-dasharray="1.600 1.400"/></g>
<path d="M205.500 113l5 4.500-5 4.500z" fill="#1c8cd0"/><path d="M205.500 113l2.500 4.500-2.500 4.500z" fill="#0c3c70"/>
<path d="M231 113.500h-8v-3.500l-8 7 8 7v-3.500h8z" fill="#a838c8" stroke="#701090" stroke-width=".5"/>
<!-- window cam -->
<rect x="241" y="107" width="26" height="25" fill="#e9e9ec"/><rect x="241" y="107" width="26" height="6.500" fill="#dcdce0"/>
<circle cx="245" cy="110.300" r="1.700" fill="#e05048"/><circle cx="250.500" cy="110.300" r="1.700" fill="#e8a830"/><circle cx="256" cy="110.300" r="1.700" fill="#58b848"/>
<use href="#cam" x="242.500" y="114.500" width="23.500" height="17"/>
<!-- tripod cam -->
<path d="M281.500 121v4M281.500 124.500l-6 8M281.500 124.500l5.500 8M281.500 124.500v9" stroke="#6a6a6a" stroke-width="1.300" fill="none"/>
<rect x="276" y="106.500" width="12" height="14.500" fill="#2c2c30"/><rect x="277.500" y="108" width="9" height="4" fill="#8c8c94"/><path d="M274 110c0-5 3-6 5-5" stroke="#555" fill="none" stroke-width=".8"/>
<circle cx="296.500" cy="111.500" r="4.600" fill="none" stroke="#e02020" stroke-width="1.100"/><path d="M296.500 105v13M290 111.500h13" stroke="#e02020" stroke-width=".9"/>
</svg>

<!-- FLOATING TOOLBAR 2 (render modes) -->
<div class="float" style="left:112px;top:198px;width:230px;height:38px"><div class="hnd"></div></div>
<div class="grip" style="left:114px;top:200.500px"></div>
<div class="hl" style="left:126px;top:200px;width:32.500px;height:32px"></div>
<svg style="left:112px;top:198px" width="230" height="38" viewBox="112 198 230 38">
<defs>
<radialGradient id="gBr" cx=".5" cy=".5" r=".55"><stop offset="0" stop-color="#c8a890"/><stop offset=".5" stop-color="#8a6450"/><stop offset="1" stop-color="#3a2418"/></radialGradient>
<radialGradient id="gBr2" cx=".4" cy=".4" r=".65"><stop offset="0" stop-color="#b89878"/><stop offset=".6" stop-color="#6c5038"/><stop offset="1" stop-color="#2c1c10"/></radialGradient>
<radialGradient id="gBl1" cx=".4" cy=".35" r=".7"><stop offset="0" stop-color="#2868e0"/><stop offset=".7" stop-color="#1448c0"/><stop offset="1" stop-color="#0c2c88"/></radialGradient>
<radialGradient id="gBl2" cx=".4" cy=".35" r=".7"><stop offset="0" stop-color="#48b4f8"/><stop offset=".7" stop-color="#1c8ce0"/><stop offset="1" stop-color="#0c5cb0"/></radialGradient>
</defs>
<use href="#cam" x="128" y="206" width="30" height="21.500"/>
<use href="#cam" x="164" y="204.500" width="30" height="21.500"/><circle cx="186.500" cy="219.500" r="8" fill="url(#gBr)"/><g fill="#f0dcc8"><circle cx="183" cy="217" r=".9"/><circle cx="186.500" cy="215.500" r=".9"/><circle cx="190" cy="217" r=".9"/><circle cx="191" cy="220.500" r=".9"/><circle cx="182.500" cy="221" r=".9"/></g>
<use href="#cam" x="200" y="204.500" width="30" height="21.500"/><circle cx="222.500" cy="219.500" r="8.200" fill="url(#gBl1)"/>
<use href="#cam" x="236" y="204.500" width="30" height="21.500"/><circle cx="258.500" cy="219.500" r="8.200" fill="url(#gBl2)"/>
<use href="#cam" x="272" y="204.500" width="30" height="21.500"/><circle cx="294.500" cy="219.500" r="8" fill="url(#gBr)"/><g fill="#fff"><circle cx="291" cy="217" r="1"/><circle cx="294.500" cy="215.500" r="1"/><circle cx="298" cy="217" r="1"/><circle cx="299" cy="220.500" r="1.100"/><circle cx="290.500" cy="221" r="1"/><circle cx="294.500" cy="223" r="1"/></g>
<use href="#cam" x="308" y="204.500" width="30" height="21.500"/><circle cx="330.500" cy="219.500" r="8.200" fill="url(#gBr2)"/>
</svg>

<!-- BOTTOM TOOLBAR -->
<div class="float" style="left:0;top:859px;width:116px;height:36px"><div class="hnd" style="width:12.500px"></div></div>
<div class="grip" style="left:3px;top:862px"></div>
<div class="hl" style="left:13.500px;top:861px;width:32.500px;height:32px;background:linear-gradient(#5d9edb,#8cc0ec 60%,#a2cff2)"></div>
<svg style="left:0;top:859px" width="116" height="36" viewBox="0 859 116 36">
<defs><linearGradient id="gZm" x1="0" y1="0" x2="1" y2="1"><stop offset="0" stop-color="#8a8a8a"/><stop offset="1" stop-color="#4a4a4a"/></linearGradient>
<linearGradient id="gRb" x1="0" y1="0" x2="1" y2="0"><stop offset="0" stop-color="#1c48b0"/><stop offset="1" stop-color="#6a84c0"/></linearGradient></defs>
<use href="#hand" x="19.500" y="863.500" width="24" height="27.500"/>
<path d="M51.300 864.700H71.500L66 870.500L78.800 880V891.700H66.500L60.500 877L51.300 884.500Z" fill="url(#gZm)"/>
<path d="M59.500 868v10M54.500 873h10" stroke="#fff" stroke-width="2.200"/><path d="M70.500 886.500h6" stroke="#fff" stroke-width="1.800"/>
<path d="M103.500 865.500C95 863 88 870 87.500 879" fill="none" stroke="url(#gRb)" stroke-width="3.600" stroke-linecap="round"/><path d="M84.200 878.500l4 6.500 4.200-7z" fill="#1c48b0"/>
<path d="M96 890.500C104 891.500 109.500 885 110.500 878" fill="none" stroke="#d84830" stroke-width="3.600" stroke-linecap="round"/><path d="M106 877.500l5-6.500 3 7.500z" fill="#f03820"/>
<path d="M88.500 889.500L101 876" stroke="#38d038" stroke-width="3.400" stroke-linecap="round"/><path d="M104.800 871.500l-7.500 2.500 5.500 5z" fill="#28c828"/>
</svg>
<!-- RENDERBIBLIOTHEK PANEL -->
<div class="abs" style="left:651px;top:676px;width:628px;height:286px;background:radial-gradient(ellipse at 50% 55%,rgba(0,0,0,.28) 60%,rgba(0,0,0,0) 100%);border-radius:14px;opacity:.25"></div>
<div class="abs" id="panel" style="left:660px;top:684px;width:611px;height:274px;background:#f0f0f0;border-top:1px solid #3a8ccc;box-shadow:0 0 10px rgba(0,0,0,.3)">
<div class="abs" style="left:0;top:0;width:611px;height:30px;background:#fff"></div>
<div class="t" style="left:8px;top:8.500px;font-size:12.500px;color:#000;transform-origin:0 0;transform:scaleX(.945)">Renderbibliothek</div>
<div class="abs" style="left:591px;top:7px;width:19px;height:19px;background:#c9525a"></div>
<div class="t" style="left:597px;top:9px;font-size:11px;font-weight:bold;color:#fff">x</div>
<!-- list box -->
<div class="abs" id="list" style="left:5px;top:36px;width:544px;height:185px;background:#f5f5f5;border:1px solid;border-color:#7a7a7a #fff #fff #7a7a7a;box-shadow:inset 1px 1px 0 #4a4a4a;overflow:hidden">
<div id="thumbs" class="abs" style="left:7px;top:-30px;width:560px;height:280px">
<!-- row0 -->
<div class="th" style="left:0;top:0;background:linear-gradient(#333 0,#444 55%,#e8e8f8 72%,#fff 100%)"><svg style="left:0;top:0" width="64" height="64" viewBox="0 0 64 64"><g stroke="#5050d0" stroke-width=".9" fill="none"><path d="M0 44L64 52M0 52L64 60M0 60L64 44M0 50L64 38M10 36L30 64M30 36L50 64M50 36L64 56M40 36L14 64M60 36L34 64"/></g><circle cx="32" cy="32" r="23" fill="#fff" stroke="#e01820" stroke-width="9"/><path d="M16 20L48 46" stroke="#e01820" stroke-width="9"/></svg></div>
<div class="th" style="left:68px;top:0;background:linear-gradient(#123 0,#1c3040 44%,#58c0e8 46%,#3a6a48 52%,#2c4a2c 60%,#1c301c 100%)"></div>
<div class="th" style="left:136px;top:0;background:linear-gradient(#333 0,#444 46%,#e8e8e0 48%,#8a7838 54%,#6a5428 70%,#3c3018 100%)"></div>
<div class="th" style="left:204px;top:0;background:#0b0c0a"></div>
<div class="th" style="left:272px;top:0;background:linear-gradient(90deg,rgba(0,0,0,0) 0,rgba(0,0,0,0) 15%,rgba(200,190,160,.55) 30%,rgba(0,0,0,0) 34%,rgba(0,0,0,0) 55%,rgba(170,160,130,.6) 75%,rgba(0,0,0,0) 100%),linear-gradient(#222 0,#555 46%,#b8b8b0 50%,#3a3a30 58%,#1c1c1c 100%)"></div>
<div class="th" style="left:340px;top:0;background:linear-gradient(#111 0,#282c20 48%,#2c4020 58%,#1c2c18 100%)"></div>
<div class="th" style="left:408px;top:0;background:linear-gradient(#111 0,#2c2c28 48%,#38342c 60%,#28241c 100%)"></div>
<div class="th" style="left:476px;top:0;background:linear-gradient(#222 0,#38402c 46%,#48602c 52%,#b09868 62%,#30501c 74%,#1c3014 100%)"></div>
<!-- row1 -->
<div class="th" style="left:0;top:68px;background:radial-gradient(ellipse 22% 22% at 52% 40%,#1c3c18 60%,rgba(0,0,0,0) 100%),radial-gradient(ellipse 12% 18% at 30% 42%,#244418 60%,rgba(0,0,0,0) 100%),radial-gradient(ellipse 10% 14% at 78% 44%,#2c4c1c 60%,rgba(0,0,0,0) 100%),radial-gradient(ellipse 26% 22% at 50% 86%,#2c5418 0,rgba(0,0,0,0) 100%),linear-gradient(#fff 0,#fff 36%,#4c7c2c 50%,#6caa38 58%,#5c9830 74%,#3c6c20 100%)"></div>
<div class="th" style="left:68px;top:68px;background:radial-gradient(ellipse 16% 14% at 38% 42%,#fff 0,#e8f0c0 40%,rgba(0,0,0,0) 100%),linear-gradient(#101c20 0,#1c3030 30%,#304840 46%,#3a3420 54%,#2a2418 70%,#241c10 100%)"></div>
<div class="th" style="left:136px;top:68px;background:radial-gradient(ellipse 32% 26% at 50% 28%,#3a6c5c 0,#5a9080 60%,rgba(0,0,0,0) 100%),linear-gradient(#e8f4f0 0,#c8e0d8 40%,#1c2c24 50%,#3c4c40 58%,#34403a 100%)"></div>
<div class="th" style="left:204px;top:68px;background:radial-gradient(ellipse 24% 14% at 32% 50%,#555 60%,rgba(0,0,0,0) 100%),linear-gradient(#e8f4fc 0,#a8d4f0 20%,#e0ecf4 42%,#888 52%,#555 60%,#3c3c3c 100%)"></div>
<div class="th" style="left:272px;top:68px;background:radial-gradient(ellipse 30% 24% at 45% 12%,#111 70%,rgba(0,0,0,0) 100%),linear-gradient(90deg,#e8f0f8 0,#3878d0 10%,#111 22%,#111 60%,#e0e8f0 72%,#4880d0 80%,#d8e0e8 100%) top/100% 45% no-repeat,linear-gradient(#222 0,#181818 45%,#2a2a2a 100%)"></div>
<div class="th" style="left:340px;top:68px;background:radial-gradient(ellipse 8% 16% at 38% 50%,#d8ecff 0,#88a8d8 60%,rgba(0,0,0,0) 100%),linear-gradient(#1c1c24 0,#2c3038 40%,#20242c 70%,#583418 84%,#70401c 100%)"></div>
<div class="th" style="left:408px;top:68px;background:radial-gradient(ellipse 10% 10% at 55% 36%,#e8c8a0 0,rgba(0,0,0,0) 100%),linear-gradient(#1c1614 0,#2c221c 40%,#1c1614 70%,#18100c 100%)"></div>
<div class="th" style="left:476px;top:68px;background:linear-gradient(#888880 0,#b0b0a8 18%,#68605a 32%,#2c201c 44%,#3c302c 70%,#8a8078 90%,#a09890 100%)"></div>
<!-- row2 -->
<div class="th" style="left:0;top:136px;background:radial-gradient(ellipse 4% 10% at 2% 50%,#e8ffe8 0,rgba(0,0,0,0) 100%),radial-gradient(ellipse 4% 10% at 97% 48%,#c8e8c8 0,rgba(0,0,0,0) 100%),linear-gradient(#10180c 0,#1c2818 30%,#364434 52%,#2c3428 66%,#1c1814 82%,#140e0c 100%)"></div>
<div class="th" style="left:68px;top:136px;background:radial-gradient(ellipse 8% 16% at 22% 58%,#e8fff0 0,#78b888 50%,rgba(0,0,0,0) 100%),radial-gradient(ellipse 10% 6% at 22% 78%,#f8fff0 0,rgba(0,0,0,0) 100%),linear-gradient(#1c2818 0,#24301c 40%,#18201a 70%,#100c0a 100%)"></div>
<div class="th" style="left:136px;top:136px;background:radial-gradient(ellipse 14% 3% at 50% 27%,#fff 0,#ccc 60%,rgba(0,0,0,0) 100%),radial-gradient(ellipse 26% 3% at 48% 55%,#c8a888 0,rgba(0,0,0,0) 100%),#060606"></div>
<div class="th" style="left:204px;top:136px;background:radial-gradient(ellipse 22% 14% at 62% 20%,#58e0c0 0,#2c8c70 50%,rgba(0,0,0,0) 100%),linear-gradient(#18281c 0,#284830 40%,#203824 70%,#14201a 100%)"></div>
<div class="th" style="left:272px;top:136px;background:radial-gradient(ellipse 9% 9% at 40% 44%,#e8f0f8 0,#98a8b8 60%,rgba(0,0,0,0) 100%),radial-gradient(ellipse 5% 7% at 82% 30%,#ffc860 0,rgba(0,0,0,0) 100%),linear-gradient(#0c0806 0,#241814 40%,#1c1410 100%)"></div>
<div class="th" style="left:340px;top:136px;background:radial-gradient(ellipse 46% 18% at 50% 26%,#a8c0e0 0,#4c6088 50%,rgba(0,0,0,0) 100%),linear-gradient(#080808 0,#181c24 45%,#0c0c0e 60%,#060606 100%)"></div>
<div class="th" style="left:408px;top:136px;background:linear-gradient(90deg,rgba(0,0,0,0) 8%,#f0f0f0 9%,#f0f0f0 11%,rgba(0,0,0,0) 12%,rgba(0,0,0,0) 14%,#f0f0f0 15%,#f0f0f0 18%,rgba(0,0,0,0) 19%,rgba(0,0,0,0) 21%,#f0f0f0 22%,#f0f0f0 24%,rgba(0,0,0,0) 25%) 0 50%/100% 26% no-repeat,radial-gradient(ellipse 12% 6% at 42% 84%,#783020 0,rgba(0,0,0,0) 100%),#0e0c0c"></div>
<div class="th" style="left:476px;top:136px;background:radial-gradient(ellipse 18% 26% at 56% 50%,#8890a8 0,#3c4458 60%,rgba(0,0,0,0) 100%),linear-gradient(#a8d0f8 0,#4878b8 12%,#28385c 30%,#141c2c 50%,#0c1018 100%)"></div>
<!-- row3 -->
<div class="th" style="left:0;top:204px;background:#1a2010"></div>
<div class="th" style="left:68px;top:204px;background:#18224a"></div>
<div class="th" style="left:136px;top:204px;background:#1a1e30"></div>
<div class="th" style="left:204px;top:204px;background:#1a2262"></div>
<div class="th" style="left:272px;top:204px;background:#0a0a1a"></div>
<div class="th" style="left:340px;top:204px;background:#10182e"></div>
<div class="th" style="left:408px;top:204px;background:#141c3a"></div>
<div class="th" style="left:476px;top:204px;background:#fff"></div>
</div></div>
<!-- v scrollbar -->
<div class="abs chk" style="left:551px;top:36px;width:16px;height:185px"></div>
<div class="btn3d" style="left:551px;top:36px;width:16px;height:16px"></div><div class="abs" style="left:555px;top:42px;border:4px solid transparent;border-bottom:4px solid #000;border-top:0"></div>
<div class="btn3d" style="left:551px;top:69px;width:16px;height:79px"></div>
<div class="btn3d" style="left:551px;top:205px;width:16px;height:16px"></div><div class="abs" style="left:555px;top:211px;border:4px solid transparent;border-top:4px solid #000;border-bottom:0"></div>
<!-- h scrollbar -->
<div class="abs chk" style="left:6px;top:223px;width:545px;height:16px"></div>
<div class="btn3d" style="left:6px;top:223px;width:16px;height:16px"></div><div class="abs" style="left:10px;top:227px;border:4px solid transparent;border-right:4px solid #000;border-left:0"></div>
<div class="btn3d" style="left:22px;top:223px;width:494px;height:16px"></div>
<div class="btn3d" style="left:534px;top:223px;width:16px;height:16px"></div><div class="abs" style="left:541px;top:227px;border:4px solid transparent;border-left:4px solid #000;border-right:0"></div>
<!-- combos -->
<div class="combo" style="left:5px;top:245px;width:276px;height:20px"><span class="tx" style="top:3.500px;left:4px;transform:scaleX(.93)">HDR Hintergrund</span><span class="dd" style="top:1px"></span></div>
<div class="combo" style="left:289px;top:245px;width:277px;height:20px"><span class="tx" style="top:3.500px;left:4px;transform:scaleX(.93)">[Alle]</span><span class="dd" style="top:1px"></span></div>
</div>
</body></html>
